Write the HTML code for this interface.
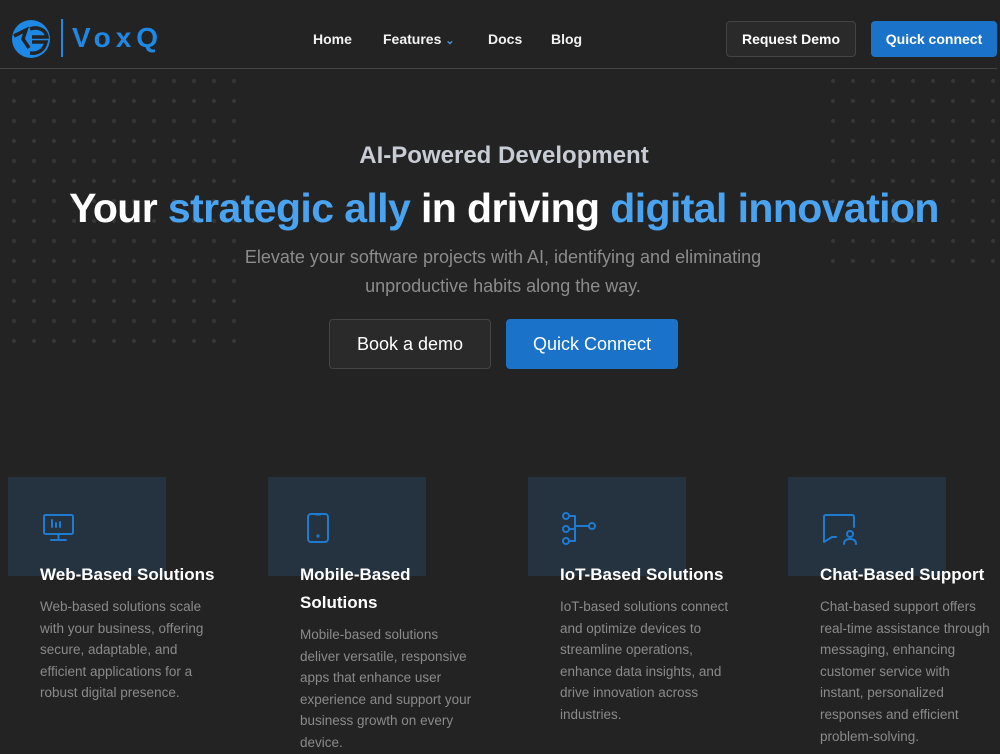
<!DOCTYPE html>
<html><head><meta charset="utf-8"><style>
*{margin:0;padding:0;box-sizing:border-box}
body{width:1000px;height:750px;overflow:hidden;background:#232323;font-family:"Liberation Sans",sans-serif;color:#fff;position:relative}
.hdr{position:absolute;left:0;top:0;width:997px;height:69px;border-bottom:1px solid #444}
.nav a{position:absolute;top:31px;font-size:15px;font-weight:bold;color:#f2f2f2}
.btn{position:absolute;border-radius:4px;font-weight:bold;display:flex;align-items:center;justify-content:center}
.dots{position:absolute;background-image:radial-gradient(circle,#363636 1.8px,transparent 2.3px);background-size:20px 20px}
.card{position:absolute;top:477px;width:158px;height:99px;background:#253240}
.ct{position:absolute;top:561px;font-size:17px;font-weight:bold;line-height:28px;color:#fff}
.cd{position:absolute;font-size:13.5px;line-height:21.6px;color:#8a8a8a}
svg.i{position:absolute;fill:none;stroke:#1e7bd0;stroke-width:2;stroke-linecap:round;stroke-linejoin:round}
</style></head><body>
<div class="hdr"></div>
<div class="dots" style="left:4px;top:71px;width:240px;height:280px"></div>
<div class="dots" style="left:823px;top:71px;width:174px;height:200px"></div>
<svg style="position:absolute;left:11px;top:19px" width="40" height="40" viewBox="0 0 40 40"><circle cx="20" cy="20" r="19" fill="#1e88e5"/><path d="M3 17 L15 11 L12 20 L18 29 M19 10 C27 7 35 11 36 18 L21 18 M21 23 L35 23 C33 32 26 35 19 34" stroke="#232323" stroke-width="3.5" fill="none"/></svg>
<div style="position:absolute;left:61px;top:19px;width:2px;height:38px;background:#1e88e5"></div>
<div style="position:absolute;left:72px;top:22px;font-size:28px;font-weight:bold;color:#1e88e5;letter-spacing:5px">VoxQ</div>
<div class="nav"><a style="left:313px;font-size:14px">Home</a><a style="left:383px;font-size:14px">Features <span style="color:#4a90d9;font-size:11px">&#8964;</span></a><a style="left:488px;font-size:14px">Docs</a><a style="left:551px;font-size:14px">Blog</a></div>
<div class="btn" style="left:726px;top:21px;width:130px;height:36px;background:#2a2a2a;border:1px solid #444;font-size:14px">Request Demo</div>
<div class="btn" style="left:871px;top:21px;width:126px;height:36px;background:#1a73c8;font-size:14px">Quick connect</div>
<div style="position:absolute;left:0;width:1008px;top:142px;text-align:center;font-size:24px;font-weight:bold;color:#c8ccd4">AI-Powered Development</div>
<div style="position:absolute;left:0;width:1008px;top:185px;text-align:center;font-size:41px;font-weight:bold;letter-spacing:-0.6px">Your <span style="color:#4aa3f0">strategic ally</span> in driving <span style="color:#4aa3f0">digital innovation</span></div>
<div style="position:absolute;left:0;width:1006px;top:243px;text-align:center;font-size:18px;line-height:29px;color:#8c8c8c">Elevate your software projects with AI, identifying and eliminating<br>unproductive habits along the way.</div>
<div class="btn" style="left:329px;top:319px;width:162px;height:50px;background:#2a2a2a;border:1px solid #444;font-size:18px;font-weight:normal">Book a demo</div>
<div class="btn" style="left:506px;top:319px;width:172px;height:50px;background:#1a73c8;font-size:18px;font-weight:normal">Quick Connect</div>

<div class="card" style="left:8px"></div><div class="card" style="left:268px"></div><div class="card" style="left:528px"></div><div class="card" style="left:788px"></div>
<svg class="i" style="left:42px;top:513px" width="34" height="30" viewBox="0 0 34 30"><rect x="2" y="2" width="29" height="19" rx="1.5"/><path d="M10 7v7M14 10v4M18 9v5M16.5 21v5M9 27h15"/></svg>
<svg class="i" style="left:306px;top:512px" width="24" height="32" viewBox="0 0 24 32"><rect x="2" y="2" width="20" height="28" rx="3"/><path d="M10 2.5h4"/><circle cx="12" cy="24" r="0.6"/></svg>
<svg class="i" style="left:561px;top:512px" width="36" height="34" viewBox="0 0 36 34"><circle cx="5" cy="4" r="3"/><circle cx="5" cy="17" r="3"/><circle cx="5" cy="29" r="3"/><circle cx="31" cy="14" r="3"/><path d="M8 4h6v25H8M8 17h6M14 14h14"/></svg>
<svg class="i" style="left:822px;top:513px" width="36" height="34" viewBox="0 0 36 34"><path d="M14 24H10l-8 5V4q0-2 2-2h26q2 0 2 2v10"/><circle cx="28" cy="21" r="3"/><path d="M22 31q0-5 6-5t6 5"/></svg>

<div class="ct" style="left:40px">Web-Based Solutions</div>
<div class="ct" style="left:300px">Mobile-Based<br>Solutions</div>
<div class="ct" style="left:560px">IoT-Based Solutions</div>
<div class="ct" style="left:820px">Chat-Based Support</div>
<div class="cd" style="left:40px;top:596px;width:175px">Web-based solutions scale with your business, offering secure, adaptable, and efficient applications for a robust digital presence.</div>
<div class="cd" style="left:300px;top:624px;width:180px">Mobile-based solutions deliver versatile, responsive apps that enhance user experience and support your business growth on every device.</div>
<div class="cd" style="left:560px;top:596px;width:178px">IoT-based solutions connect and optimize devices to streamline operations, enhance data insights, and drive innovation across industries.</div>
<div class="cd" style="left:820px;top:596px;width:180px;white-space:nowrap">Chat-based support offers<br>real-time assistance through<br>messaging, enhancing<br>customer service with<br>instant, personalized<br>responses and efficient<br>problem-solving.</div>
</body></html>
